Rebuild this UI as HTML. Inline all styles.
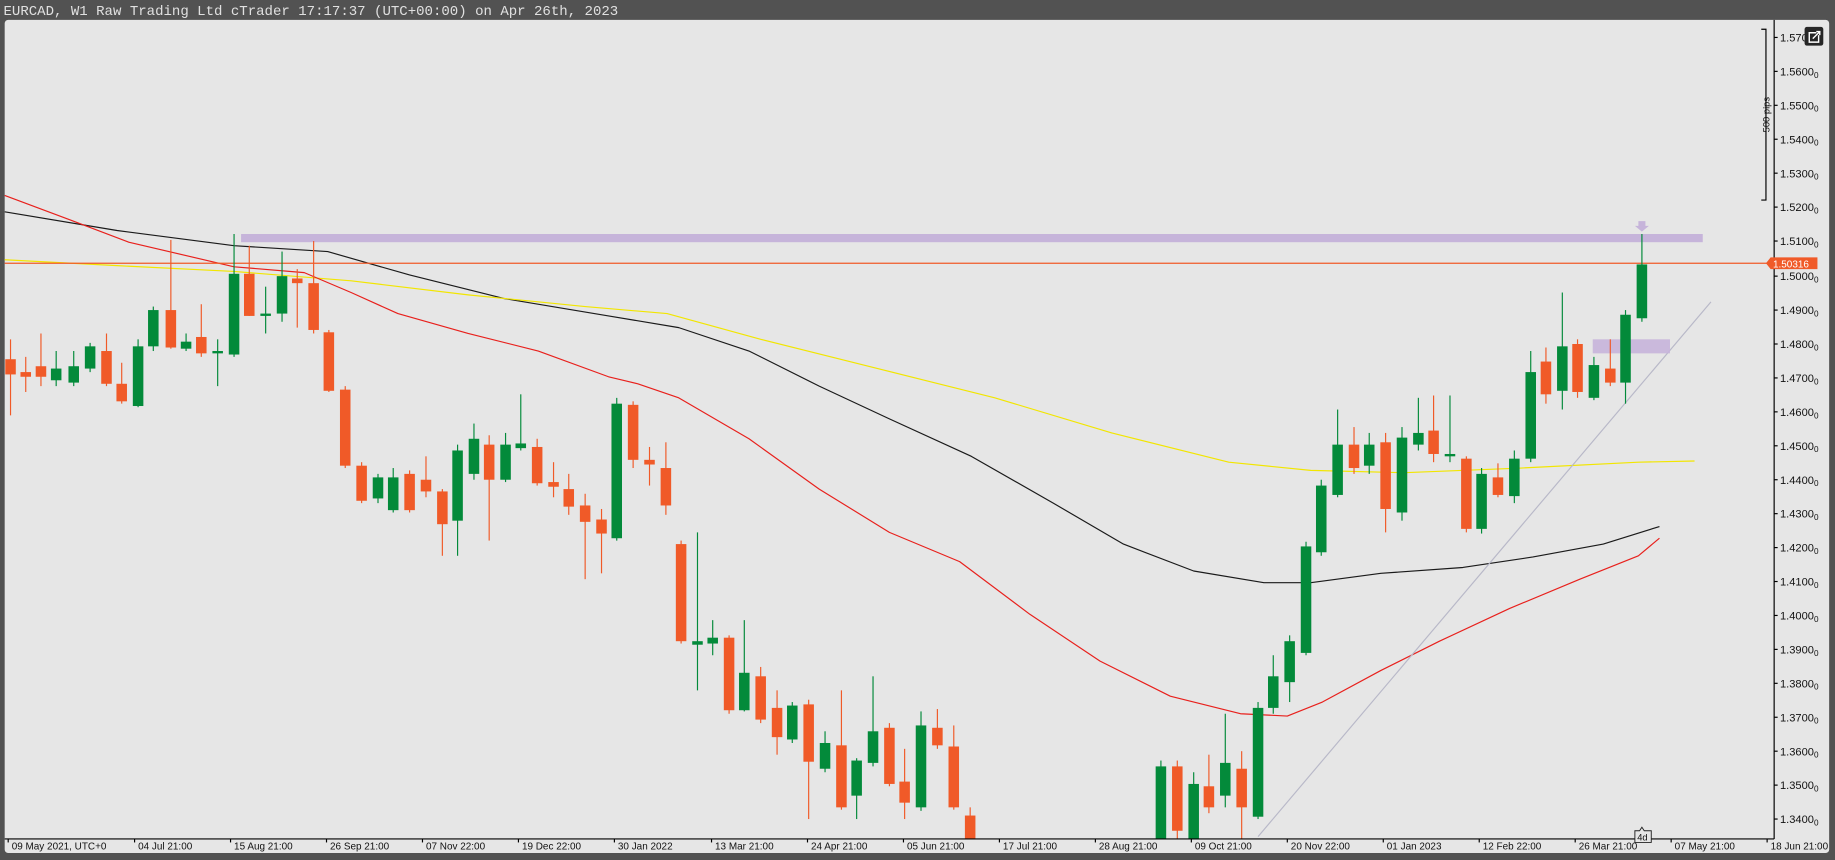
<!DOCTYPE html>
<html><head><meta charset="utf-8"><style>
html,body{margin:0;padding:0;background:#525252;width:1835px;height:860px;overflow:hidden}
svg{display:block}
</style></head><body>
<svg id="s" width="1835" height="860" viewBox="0 0 1568 735" preserveAspectRatio="none" xmlns="http://www.w3.org/2000/svg">
<rect x="0" y="0" width="1568" height="735" fill="#525252"/>
<text x="3" y="13" font-family="Liberation Mono, monospace" font-size="12" fill="#e0e0e0">EURCAD, W1 Raw Trading Ltd cTrader 17:17:37 (UTC+00:00) on Apr 26th, 2023</text>
<rect x="4" y="17" width="1559" height="712" rx="3" fill="#e6e6e6"/>
<g id="g"></g>
</svg>
<script>
var g=document.getElementById('g'),h='';
function pl(pts,c,w){h+='<polyline fill="none" stroke="'+c+'" stroke-width="'+(w||1)+'" stroke-linejoin="round" points="'+pts.map(function(p){return p.join(',')}).join(' ')+'"/>';}
pl([[4,181],[100,197],[200,210],[280,215],[350,235],[430,255],[520,270],[580,280],[640,300],[700,330],[760,358],[830,390],[900,430],[960,465],[1020,488],[1080,498],[1120,498],[1180,490],[1250,485],[1310,476],[1370,465],[1418,450]],'#1a1a1a');
pl([[4,222],[100,227],[200,232],[300,240],[400,252],[500,262],[570,268],[650,290],[750,315],[850,340],[950,370],[1050,395],[1120,402],[1200,404],[1300,400],[1400,395],[1448,394]],'#f2e600');
pl([[4,167],[60,188],[110,207],[200,228],[260,233],[300,250],[340,268],[400,285],[460,300],[520,322],[545,328],[580,340],[640,375],[700,418],[760,455],[820,480],[880,525],[940,565],[1000,595],[1060,610],[1100,612],[1130,600],[1180,573],[1230,548],[1290,520],[1350,495],[1400,475],[1418,460]],'#e8201c');
h+='<line x1="1075" y1="715" x2="1462" y2="258" stroke="#b8b8c8" stroke-width="1"/>';
h+='<line x1="4" y1="225" x2="1516" y2="225" stroke="#f05a28" stroke-width="1"/>';
h+='<rect x="206" y="200" width="1249" height="7" fill="#c6b4da"/>';
h+='<rect x="1361" y="290" width="66" height="12" fill="#c6b4da" opacity="0.9"/>';
var C=[[9,307,320,290,355,'o'],[22,318,322,305,335,'o'],[35,313,322,285,330,'o'],[48,315,325,300,330,'g'],[63,313,327,300,330,'g'],[77,296,315,293,318,'g'],[91,300,328,285,330,'o'],[104,328,343,310,345,'o'],[118,296,347,290,348,'g'],[131,265,296,262,300,'g'],[146,265,297,205,298,'o'],[159,292,298,285,300,'g'],[172,288,302,260,305,'o'],[186,300,302,290,330,'g'],[200,234,303,200,305,'g'],[213,234,270,210,270,'o'],[227,268,270,245,285,'g'],[241,236,268,215,275,'g'],[254,238,242,230,280,'o'],[268,242,282,206,285,'o'],[281,284,334,282,335,'o'],[295,333,398,330,400,'o'],[309,398,428,395,430,'o'],[323,408,426,405,430,'g'],[336,408,436,400,438,'g'],[350,405,436,402,438,'o'],[364,410,420,390,425,'o'],[378,420,448,418,475,'o'],[391,385,445,380,475,'g'],[405,375,405,362,410,'g'],[418,380,410,372,462,'o'],[432,380,410,370,412,'g'],[445,379,383,337,385,'g'],[459,382,413,375,415,'o'],[473,412,416,395,425,'o'],[486,418,433,405,440,'o'],[500,432,446,422,495,'o'],[514,444,456,435,490,'o'],[527,345,460,340,462,'g'],[541,346,393,343,400,'o'],[555,393,397,382,415,'o'],[569,400,432,378,440,'o'],[582,465,548,462,550,'o'],[596,548,551,455,590,'g'],[609,545,550,530,560,'g'],[623,545,607,543,610,'o'],[636,575,607,530,608,'g'],[650,578,615,570,618,'o'],[664,605,630,590,645,'o'],[677,603,632,600,635,'g'],[691,602,651,598,700,'o'],[705,635,657,625,660,'g'],[719,637,690,590,692,'o'],[732,650,680,648,700,'g'],[746,625,652,578,655,'g'],[760,622,670,618,672,'o'],[773,668,686,640,700,'o'],[787,620,690,608,693,'g'],[801,622,637,606,640,'o'],[815,638,690,620,692,'o'],[829,697,740,690,740,'o'],[992,655,740,650,740,'g'],[1006,655,710,650,740,'o'],[1020,670,740,660,740,'g'],[1033,672,690,645,695,'o'],[1047,652,680,610,690,'g'],[1061,657,690,642,720,'o'],[1075,605,698,600,700,'g'],[1088,578,605,560,610,'g'],[1102,548,583,543,600,'g'],[1116,467,558,463,560,'g'],[1129,415,472,410,475,'g'],[1143,380,423,350,425,'g'],[1157,380,400,365,405,'o'],[1170,380,398,370,405,'g'],[1184,378,435,370,455,'o'],[1198,374,438,365,445,'g'],[1212,370,380,340,385,'g'],[1225,368,388,338,395,'o'],[1239,388,390,338,395,'g'],[1253,392,452,390,455,'o'],[1266,405,452,400,456,'g'],[1280,408,423,396,425,'o'],[1294,392,424,385,430,'g'],[1308,318,392,300,395,'g'],[1321,309,337,297,345,'o'],[1335,296,334,250,350,'g'],[1348,294,335,290,340,'o'],[1362,312,340,305,342,'g'],[1376,315,327,290,330,'o'],[1389,269,327,265,345,'g'],[1403,226,272,200,275,'g']];
h+='<g clip-path="url(#cp)">';
C.forEach(function(c){var col=c[5]=='g'?'#038a3a':'#f05a28';
h+='<line x1="'+c[0]+'" y1="'+c[3]+'" x2="'+c[0]+'" y2="'+c[4]+'" stroke="'+col+'" stroke-width="1"/>';
h+='<rect x="'+(c[0]-4.5)+'" y="'+c[1]+'" width="9" height="'+Math.max(2,c[2]-c[1])+'" fill="'+col+'"/>';});
h+='</g><defs><clipPath id="cp"><rect x="4" y="17" width="1512" height="700"/></clipPath></defs>';
h+='<path d="M1400,189h6v4h3l-6,5l-6,-5h3z" fill="#c6b4da"/>';
h+='<line x1="1516" y1="17" x2="1516" y2="717" stroke="#000"/><line x1="4" y1="717" x2="1516" y2="717" stroke="#000"/>';
var P=['1.5700','1.5600','1.5500','1.5400','1.5300','1.5200','1.5100','1.5000','1.4900','1.4800','1.4700','1.4600','1.4500','1.4400','1.4300','1.4200','1.4100','1.4000','1.3900','1.3800','1.3700','1.3600','1.3500','1.3400'];
P.forEach(function(p,i){var y=32+i*29.0;if(i>=7)y=236+(i-7)*29;
h+='<line x1="1516" y1="'+y+'" x2="1519" y2="'+y+'" stroke="#000"/><text x="1521" y="'+(y+3.5)+'" font-family="Liberation Sans, sans-serif" font-size="9.5" fill="#111">'+p+'<tspan font-size="7" dy="2">0</tspan></text>';});
h+='<path d="M1505,25h4v146h-4" fill="none" stroke="#000"/>';
h+='<text transform="translate(1512,98) rotate(-90)" font-family="Liberation Sans, sans-serif" font-size="8" text-anchor="middle" fill="#111">500 pips</text>';
h+='<path d="M1509,225l4,-5h40v10h-40z" fill="#f05a28"/><text x="1515" y="228.5" font-family="Liberation Sans, sans-serif" font-size="8.5" fill="#fff">1.50316</text>';
h+='<rect x="1542" y="23" width="16" height="16" rx="2" fill="#262626"/><path d="M1552,28h-6v8h8v-6M1549,33l6,-6M1552,27h3v3" fill="none" stroke="#fff" stroke-width="1.2"/>';
var D=[[10,'09 May 2021, UTC+0'],[118,'04 Jul 21:00'],[200,'15 Aug 21:00'],[282,'26 Sep 21:00'],[364,'07 Nov 22:00'],[446,'19 Dec 22:00'],[528,'30 Jan 2022'],[611,'13 Mar 21:00'],[693,'24 Apr 21:00'],[775,'05 Jun 21:00'],[857,'17 Jul 21:00'],[939,'28 Aug 21:00'],[1021,'09 Oct 21:00'],[1103,'20 Nov 22:00'],[1185,'01 Jan 2023'],[1267,'12 Feb 22:00'],[1349,'26 Mar 21:00'],[1431,'07 May 21:00'],[1513,'18 Jun 21:00']];
D.forEach(function(d){h+='<line x1="'+(d[0]-3)+'" y1="717" x2="'+(d[0]-3)+'" y2="720" stroke="#000"/><text x="'+d[0]+'" y="726" font-family="Liberation Sans, sans-serif" font-size="8.5" fill="#111">'+d[1]+'</text>';});
h+='<path d="M1397,710h4l2,-3l2,3h6v10h-14z" fill="#e6e6e6" stroke="#222" stroke-width="0.8"/><text x="1399" y="718.5" font-family="Liberation Sans, sans-serif" font-size="8" fill="#111">4d</text>';
g.innerHTML=h;
</script>
</body></html>
